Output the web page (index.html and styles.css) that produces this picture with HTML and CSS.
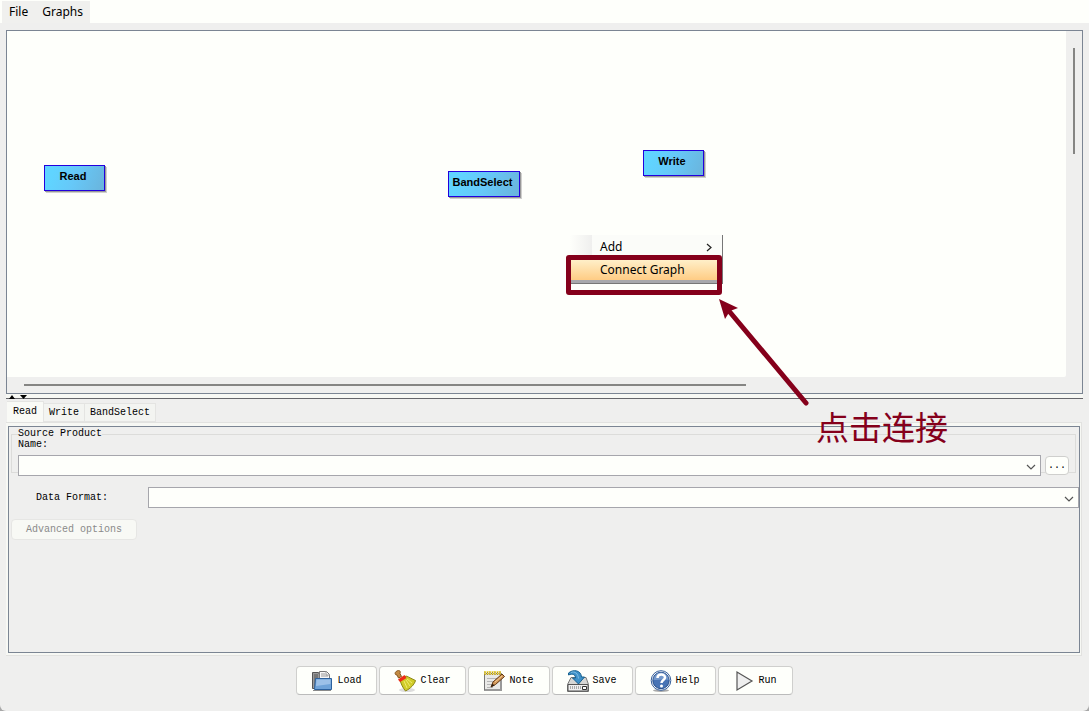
FILE: index.html
```html
<!DOCTYPE html>
<html lang="en">
<head>
  <meta charset="UTF-8" />
  <title>Graph Builder</title>
  <link rel="stylesheet" href="styles.css">
</head>
<body>
  <nav class="menubar">
    <button type="button">File</button>
    <button type="button">Graphs</button>
  </nav>

  <main class="workspace">
    <section class="graph-pane">
      <div class="canvas">
        <div class="node node-read">Read</div>
        <div class="node node-bandselect">BandSelect</div>
        <div class="node node-write">Write</div>

        <div class="context-menu">
          <button type="button" class="menu-item">Add
            <svg width="6" height="9" viewBox="0 0 6 9"><path d="M1 1l4 3.5L1 8" fill="none" stroke="#222" stroke-width="1.2"/></svg>
          </button>
          <button type="button" class="menu-item active">Connect Graph</button>
        </div>
        <div class="highlight"></div>
      </div>
      <div class="scroll-v"><div class="thumb"></div></div>
      <div class="scroll-h"><div class="thumb"></div></div>

      <svg class="arrow" width="92" height="109" viewBox="0 0 92 109">
        <path d="M10 12L87 104" stroke="#85001b" stroke-width="5" stroke-linecap="round"/>
        <path d="M0 0l19 9-8 3-5 8z" fill="#85001b"/>
      </svg>
      <p class="callout" lang="zh-CN">点击连接</p>
    </section>

    <div class="splitter">
      <svg width="18" height="4" viewBox="0 0 18 4"><path d="M0 4l3-4 3 4zM11 0h7l-3.500 4z" fill="#000"/></svg>
    </div>

    <section class="params">
      <div class="tabs" role="tablist">
        <button type="button" class="tab selected" role="tab">Read</button>
        <button type="button" class="tab" role="tab">Write</button>
        <button type="button" class="tab" role="tab">BandSelect</button>
      </div>
      <div class="tab-body">
        <div class="tab-panel" role="tabpanel">
          <fieldset class="source">
            <legend>Source Product</legend>
            <label for="product">Name:</label>
            <div class="source-row">
              <div class="combo">
                <select id="product"><option></option></select>
                <svg width="10" height="6" viewBox="0 0 10 6"><path d="M1 1l4 4 4-4" fill="none" stroke="#555" stroke-width="1.2"/></svg>
              </div>
              <button type="button" class="browse">...</button>
            </div>
          </fieldset>
          <div class="format-row">
            <label for="format">Data Format:</label>
            <div class="combo">
              <select id="format"><option></option></select>
              <svg width="10" height="6" viewBox="0 0 10 6"><path d="M1 1l4 4 4-4" fill="none" stroke="#555" stroke-width="1.2"/></svg>
            </div>
          </div>
          <button type="button" class="advanced" disabled>Advanced options</button>
        </div>
      </div>
    </section>
  </main>

  <footer class="actions">
    <button type="button">
      <svg viewBox="0 0 22 22">
        <path d="M1.500 2.500h6l1 2h9v14h-16z" fill="#999" stroke="#555"/>
        <path d="M3 4h4v13H3z" fill="#777"/>
        <path d="M8.500 8V1.500h7l3 3V9h-10z" fill="#f7f7f7" stroke="#777"/>
        <path d="M15 1v4h4M10 4h4M10 6h7" fill="none" stroke="#999"/>
        <path d="M4.500 8.500h16v11h-17z" fill="#6fa3d8" stroke="#2c619d"/>
        <path d="M5.500 9.500h14v4.500L5 16z" fill="#9cc1e8"/>
        <path d="M2 20.500h18" stroke="#8a8a8a"/>
      </svg>
      Load
    </button>
    <button type="button">
      <svg viewBox="0 0 22 22">
        <ellipse cx="13" cy="20" rx="8" ry="2" fill="#ddd"/>
        <path d="M3 1c2-1.500 4 0 3 2.500l1.500 3-3 1.500L3 5C.5 5 .5 2 3 1z" fill="#c28a43" stroke="#85551c"/>
        <path d="M6 10l6-4c3 1 6 3 9.500 4.500-1 4-5 8-10 10.500C9 18 7 14 6 10z" fill="#d0cc28" stroke="#8a8515"/>
        <path d="M10 11l3 7M12 10l4 6M13 9l5 4" stroke="#eeea72" fill="none"/>
        <path d="M4 9.500l6.500-4.500 2 3L6 12z" fill="#ef2a16"/>
      </svg>
      Clear
    </button>
    <button type="button">
      <svg viewBox="0 0 22 22">
        <path d="M1.500 3.500h17v17h-17z" fill="#e9e9e7" stroke="#777"/>
        <path d="M18 5v15H2" fill="none" stroke="#999" stroke-width="2"/>
        <path d="M4 8.500h11M4 11.500h10M4 14.500h8M4 17.500h6" stroke="#b5b5b5"/>
        <path d="M2 1v4M4.500 1v4M7 1v4M9.500 1v4M12 1v4M14.500 1v4M17 1v4" stroke="#b99b10" stroke-width="1.500"/>
        <path d="M1.500 1.500h16M1.500 3.500h16" stroke="#f2df55" stroke-dasharray="1.500 1"/>
        <path d="M8 17l2-5 9-8 2.500 2.500-9 8z" fill="#d39a5c" stroke="#613512"/>
        <path d="M8 17l1.500-3.500 2 2z" fill="#302010"/>
        <path d="M12 12l7-6" stroke="#f5cb91"/>
      </svg>
      Note
    </button>
    <button type="button">
      <svg viewBox="0 0 22 22">
        <path d="M4 7.500h15l2.500 7v7h-21v-7z" fill="#d6d6d4" stroke="#777"/>
        <path d="M1 14.500h20v6.500H1z" fill="#eee" stroke="#555"/>
        <path d="M3 17.500h11" stroke="#aaa" stroke-width="3" stroke-dasharray="1 1"/>
        <path d="M15.500 16.500h4v3h-4z" fill="#fff" stroke="#333"/>
        <path d="M1.500 3C6-1 14 0 14.500 7h3L11.500 14 5.500 8h3C8.500 5 6 3 1.500 5z" fill="#3f91c9" stroke="#17608f"/>
        <path d="M4 2.500c4-1.500 7 1 7.500 6" fill="none" stroke="#7dbce3"/>
      </svg>
      Save
    </button>
    <button type="button">
      <svg viewBox="0 0 22 22">
        <ellipse cx="11" cy="20.500" rx="8" ry="1.500" fill="#aaa"/>
        <circle cx="11" cy="10.500" r="9.800" fill="#fff" stroke="#315c9b"/>
        <circle cx="11" cy="10.500" r="8.200" fill="#4874b5" stroke="#244c88"/>
        <path d="M3.500 10a7.500 7.500 0 0 1 15 0c-5-1-9 0-15 0z" fill="#7398cc"/>
        <path d="M7.500 8c0-4.500 7.500-4.500 7.500-.5 0 2.500-3.500 2.500-3.500 5.500" fill="none" stroke="#fff" stroke-width="2.500"/>
        <circle cx="11.500" cy="16" r="1.500" fill="#fff"/>
      </svg>
      Help
    </button>
    <button type="button">
      <svg viewBox="0 0 22 22">
        <path d="M4 2v18l15-9z" fill="#eee" stroke="#555" stroke-width="1.200"/>
      </svg>
      Run
    </button>
  </footer>
</body>
</html>
```
FILE: styles.css
```css
* {
  margin: 0;
  padding: 0;
  box-sizing: border-box;
}

html {
  background-color: #a8a8a8;
}

body {
  display: flex;
  flex-direction: column;
  min-height: 100vh;
  background-color: #efefee;
  color: #000;
  font-family: "Liberation Mono", monospace;
  font-size: 10px;
  line-height: 10px;
  border-radius: 0 0 6px 6px;
}

button,
select {
  font: inherit;
  color: inherit;
}

svg {
  display: block;
}

/* Menu bar */
.menubar {
  display: flex;
  height: 23px;
  padding: 1px 2px 0;
  background-color: #fefffb;
}

.menubar button {
  padding: 0 7px;
  border: none;
  background-color: #f0f0ee;
  font-family: "Noto Sans", sans-serif;
  font-size: 12px;
}

/* Graph area on top, parameters below */
.workspace {
  flex: 1;
  display: grid;
  grid-template-rows: minmax(0, 17fr) 5px minmax(0, 12fr);
  padding: 7px 6px 0;
}

.graph-pane {
  position: relative;
  display: grid;
  grid-template-columns: 1fr 16px;
  grid-template-rows: 1fr 16px;
  border: 1px solid #7b8593;
}

.canvas {
  position: relative;
  background-color: #fefffb;
  border-bottom-right-radius: 2px;
}

.scroll-v {
  padding: 17px 7px;
}

.scroll-v .thumb {
  width: 2px;
  height: 34%;
  background-color: #858583;
}

.scroll-h {
  padding: 7px 17px;
}

.scroll-h .thumb {
  width: 70.4%;
  height: 2px;
  background-color: #858583;
}

/* Graph nodes */
.node {
  position: absolute;
  width: 61px;
  height: 26px;
  padding-right: 3px;
  border: 1px solid #2200dd;
  background: linear-gradient(110deg, #60d4ff 15%, #66c8f8 50%, #6ab4dc);
  box-shadow: 1px 1px 0 #999, 2px 2px 0 #d0d0ce;
  font-family: "Liberation Sans", sans-serif;
  font-size: 11px;
  font-weight: bold;
  line-height: 21px;
  text-align: center;
}

.node-read {
  left: 37px;
  top: 134px;
}

.node-bandselect {
  left: 441px;
  top: 140px;
  width: 72px;
}

.node-write {
  left: 636px;
  top: 119px;
}

/* Right-click menu */
.context-menu {
  position: absolute;
  left: 563px;
  top: 204px;
  width: 153px;
  border-right: 1px solid #777;
  border-bottom: 1px solid #777;
  background: linear-gradient(to right, #fefffb, #efefee 22px, #fbfcf9 22px);
}

.menu-item {
  display: flex;
  align-items: center;
  justify-content: space-between;
  width: 100%;
  height: 24px;
  padding: 0 10px 0 30px;
  border: none;
  background: none;
  font-family: "Noto Sans", sans-serif;
  font-size: 12px;
}

.menu-item.active {
  background: linear-gradient(#fff1cc, #ffcc84);
  border-bottom: 3px solid #a8a8ac;
}

.highlight {
  position: absolute;
  left: 559px;
  top: 224px;
  width: 156px;
  height: 40px;
  border: 5px solid #85001b;
  border-radius: 3px;
}

/* Annotation */
.arrow {
  position: absolute;
  left: 712px;
  top: 268px;
}

.callout {
  position: absolute;
  left: 809px;
  top: 378px;
  color: #85001b;
  font-family: "Noto Sans CJK SC", sans-serif;
  font-size: 33px;
  line-height: 34px;
  white-space: nowrap;
}

.splitter {
  padding: 1px 3px 0;
  background-color: #f7f8f4;
  border-bottom: 1px solid #65656a;
}

/* Parameter tabs */
.params {
  display: flex;
  flex-direction: column;
  padding: 2px 1px 0 0;
}

.tabs {
  display: flex;
  align-items: flex-end;
  height: 21px;
  padding-left: 1px;
}

.tab {
  height: 19px;
  padding: 0 5px;
  border: 1px solid #e4e4e2;
  border-left: none;
  background-color: #f3f4f1;
}

.tab.selected {
  height: 21px;
  padding: 0 6px;
  border-bottom: none;
  background-color: #f9faf6;
}

.tab-body {
  flex: 1;
  display: flex;
  padding: 3px 1px 2px 2px;
  border: 1px solid #e2e2e0;
  border-left: none;
  background-color: #f7f8f4;
}

.tab-panel {
  flex: 1;
  padding: 2px 0 0 2px;
  border: 1px solid #7b8593;
  background-color: #efefee;
}

.source {
  margin-right: 3px;
  padding: 0 6px;
  border: 1px solid #dcdcda;
}

.source legend {
  font-size: 10px;
}

.source label {
  display: block;
  padding-top: 1px;
}

.source-row {
  display: flex;
  align-items: center;
  gap: 4px;
  margin: 5px 0 -4px;
}

.combo {
  position: relative;
  flex: 1;
}

.combo select {
  display: block;
  width: 100%;
  height: 21px;
  padding: 0 24px 0 4px;
  appearance: none;
  border: 1px solid #a6a6ac;
  border-radius: 0;
  background-color: #fefffb;
}

.combo svg {
  position: absolute;
  right: 5px;
  top: 9px;
  pointer-events: none;
}

.browse {
  width: 24px;
  height: 19px;
  border: 1px solid #cfcfcd;
  border-radius: 4px;
  background-color: #fefffb;
}

.format-row {
  display: flex;
  align-items: center;
  margin-top: 14px;
}

.format-row label {
  width: 137px;
  padding-left: 25px;
}

.advanced {
  width: 126px;
  height: 21px;
  margin-top: 11px;
  border: 1px solid #e6e6e4;
  border-radius: 4px;
  background-color: #f8f9f5;
  color: #8a8a8a;
}

/* Bottom buttons */
.actions {
  display: flex;
  justify-content: center;
  gap: 2px;
  padding: 10px 0 16px;
}

.actions button {
  display: flex;
  align-items: center;
  gap: 4px;
  height: 29px;
  padding: 0 15px 0 14px;
  border: 1px solid #cfcfcd;
  border-bottom-color: #bbb;
  border-radius: 4px;
  background-color: #fefffb;
}

.actions svg {
  width: 22px;
  height: 22px;
}
```
